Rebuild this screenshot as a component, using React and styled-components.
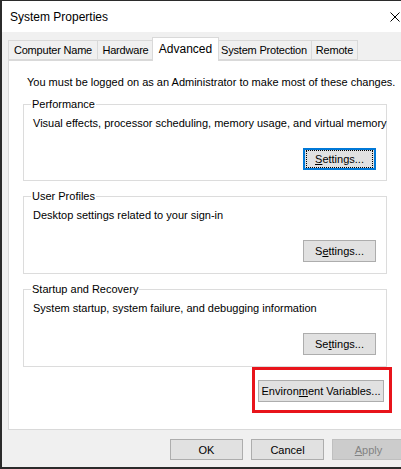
import React from 'react';
import styled, { createGlobalStyle } from 'styled-components';

const GlobalStyle = createGlobalStyle`
  html, body {
    margin: 0;
    padding: 0;
    background: #2b2b2b;
    overflow: hidden;
  }
  body {
    font-family: "Liberation Sans", Arial, sans-serif;
    font-size: 11px;
    color: #000;
  }
`;

const Window = styled.div`
  box-sizing: border-box;
  width: 401px;
  height: 469px;
  border-top: 1px solid #2b2b2b;
  border-left: 2px solid #2b2b2b;
  border-bottom: 2px solid #2b2b2b;
  background: #f0f0f0;
  display: flex;
  flex-direction: column;
`;

const TitleBar = styled.div`
  height: 31px;
  background: #fff;
  display: flex;
  align-items: center;
  justify-content: space-between;
  padding: 0 1px 0 8px;
  font-size: 12px;
  color: #000;
`;

const Body = styled.div`
  flex: 1;
  display: flex;
  flex-direction: column;
  padding: 6px 0 0 6px;
`;

const TabRow = styled.div`
  display: flex;
  align-items: flex-end;
  height: 22px;
  position: relative;
  z-index: 1;
`;

const Tab = styled.div`
  box-sizing: border-box;
  width: ${p => p.$w}px;
  height: ${p => (p.$active ? '24px' : '20px')};
  margin: ${p => (p.$active ? '0 -2px -1px -2px' : '0')};
  margin-left: ${p => (p.$first ? '0' : p.$active ? '-2px' : '-1px')};
  background: ${p => (p.$active ? '#fff' : '#f0f0f0')};
  border: 1px solid #d9d9d9;
  border-bottom: ${p => (p.$active ? 'none' : '1px solid #d9d9d9')};
  position: relative;
  z-index: ${p => (p.$active ? 2 : 1)};
  display: flex;
  justify-content: center;
  align-items: ${p => (p.$active ? 'flex-start' : 'center')};
  padding-top: ${p => (p.$active ? '4px' : '0')};
  font-size: ${p => (p.$active ? '12px' : '11px')};
  letter-spacing: ${p => (p.$active ? '0' : '-0.2px')};
  white-space: nowrap;
`;

const Panel = styled.div`
  box-sizing: border-box;
  background: #fff;
  border: 1px solid #d9d9d9;
  border-right: none;
  height: 370px;
  padding: 14px 0 0 14px;
  display: flex;
  flex-direction: column;
`;

const Intro = styled.p`
  margin: 0 0 9px 4px;
  line-height: 14px;
  white-space: nowrap;
`;

const Group = styled.fieldset`
  box-sizing: border-box;
  width: 364px;
  min-width: 0;
  height: ${p => p.$h}px;
  margin: 0 0 ${p => p.$mb}px 0;
  padding: 5px 10px 0 9px;
  border: 1px solid #dcdcdc;
  display: flex;
  flex-direction: column;
`;

const Legend = styled.legend`
  padding: 0 1px;
  margin-left: -2px;
  line-height: 13px;
`;

const Desc = styled.div`
  line-height: 14px;
  margin-bottom: 18px;
  white-space: nowrap;
`;

const ButtonRow = styled.div`
  display: flex;
  justify-content: flex-end;
`;

const Button = styled.button`
  box-sizing: border-box;
  width: ${p => p.$w || 73}px;
  height: ${p => p.$h || 22}px;
  padding: 0;
  font-family: "Liberation Sans", Arial, sans-serif;
  font-size: 11px;
  white-space: nowrap;
  color: ${p => (p.disabled ? '#838383' : '#000')};
  background: ${p => (p.disabled ? '#cccccc' : '#e1e1e1')};
  border: ${p => (p.$focus ? '2px solid #0078d7' : p.disabled ? '1px solid #bfbfbf' : '1px solid #adadad')};
  display: flex;
  align-items: center;
  justify-content: center;
  flex-shrink: 0;
`;

const FocusRing = styled.span`
  box-sizing: border-box;
  width: 100%;
  height: 100%;
  margin: 1px;
  border: 1px dotted #000;
  display: flex;
  align-items: center;
  justify-content: center;
`;

const EnvRow = styled.div`
  display: flex;
  justify-content: flex-end;
  width: 369px;
`;

const Highlight = styled.div`
  border: 3px solid #e8141b;
  padding: 10px 5px 8px 3px;
`;

const Footer = styled.div`
  display: flex;
  gap: 8px;
  padding: 9px 0 0 162px;
`;

const Key = styled.u`
  text-decoration: underline;
  text-underline-offset: 1px;
`;

function Label({ text, k }) {
  if (k == null) return text;
  return (
    <>
      {text.slice(0, k)}
      <Key>{text[k]}</Key>
      {text.slice(k + 1)}
    </>
  );
}

const CloseIcon = () => (
  <svg width="10" height="10" viewBox="0 0 10 10">
    <path d="M0.5 0.5 L9.5 9.5 M9.5 0.5 L0.5 9.5" stroke="#000" strokeWidth="1" fill="none" />
  </svg>
);

const tabs = [
  { name: 'Computer Name', w: 90 },
  { name: 'Hardware', w: 57 },
  { name: 'Advanced', w: 67, active: true },
  { name: 'System Protection', w: 96 },
  { name: 'Remote', w: 47 },
];

const groups = [
  { title: 'Performance', desc: 'Visual effects, processor scheduling, memory usage, and virtual memory', k: 0, focus: true, h: 83, mb: 9 },
  { title: 'User Profiles', desc: 'Desktop settings related to your sign-in', k: 1, h: 84, mb: 9 },
  { title: 'Startup and Recovery', desc: 'System startup, system failure, and debugging information', k: 2, h: 84, mb: 0 },
];

export default function App() {
  return (
    <>
      <GlobalStyle />
      <Window>
        <TitleBar>
          <span>System Properties</span>
          <CloseIcon />
        </TitleBar>
        <Body>
          <TabRow>
            {tabs.map((t, i) => (
              <Tab key={t.name} $w={t.w} $first={i === 0} $active={t.active}>{t.name}</Tab>
            ))}
          </TabRow>
          <Panel>
            <Intro>You must be logged on as an Administrator to make most of these changes.</Intro>
            {groups.map(g => (
              <Group key={g.title} $h={g.h} $mb={g.mb}>
                <Legend>{g.title}</Legend>
                <Desc>{g.desc}</Desc>
                <ButtonRow>
                  <Button $focus={g.focus}>
                    {g.focus ? (
                      <FocusRing><Label text="Settings..." k={g.k} /></FocusRing>
                    ) : (
                      <Label text="Settings..." k={g.k} />
                    )}
                  </Button>
                </ButtonRow>
              </Group>
            ))}
            <EnvRow>
              <Highlight>
                <Button $w={126}><Label text="Environment Variables..." k={7} /></Button>
              </Highlight>
            </EnvRow>
          </Panel>
          <Footer>
            <Button $w={73} $h={21}>OK</Button>
            <Button $w={73} $h={21}>Cancel</Button>
            <Button $w={73} $h={21} disabled><Label text="Apply" k={0} /></Button>
          </Footer>
        </Body>
      </Window>
    </>
  );
}
